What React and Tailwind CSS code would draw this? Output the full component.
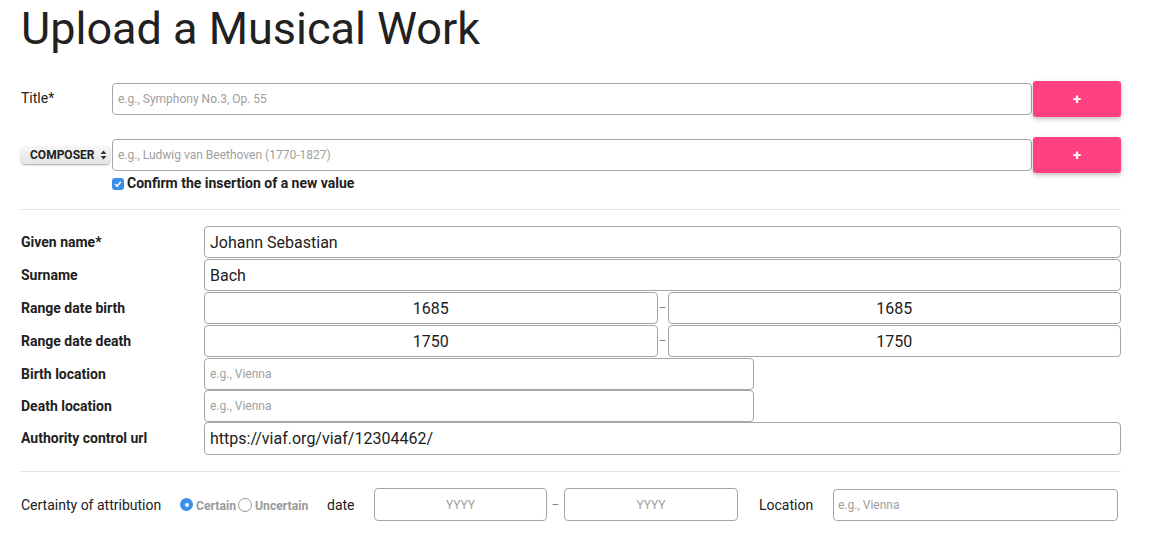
import React from "react";

const inputBase =
  "border border-[#a6a6a6] rounded-[4px] bg-white outline-none font-['Roboto',sans-serif] text-[#212121]";

const PlusButton = () => (
  <button className="w-[88px] h-[36px] ml-px bg-[#ff4081] text-white text-[15px] font-bold rounded-[3px] shadow-[0_2px_5px_rgba(0,0,0,0.26)] flex items-center justify-center">
    +
  </button>
);

const FieldRow = ({ label, children, className = "h-[32px]" }) => (
  <div className={`flex items-center ${className}`}>
    <label className="w-[183px] shrink-0 text-[14px] font-bold text-[#212121]">{label}</label>
    {children}
  </div>
);

const RangeInputs = ({ from, to }) => (
  <div className="flex items-center flex-1 h-full">
    <input readOnly value={from} className={`${inputBase} flex-1 h-full text-center text-[16px]`} />
    <span className="w-[10px] text-center text-[#888] text-[12px]">–</span>
    <input readOnly value={to} className={`${inputBase} flex-1 h-full text-center text-[16px]`} />
  </div>
);

const Radio = ({ checked, label, className = "" }) => (
  <span className={`flex items-center ${className}`}>
    {checked ? (
      <span className="w-[13px] h-[13px] rounded-full bg-[#3b8eea] flex items-center justify-center">
        <span className="w-[4px] h-[4px] rounded-full bg-white" />
      </span>
    ) : (
      <span className="w-[14px] h-[14px] rounded-full border border-[#9a9a9a] bg-white" />
    )}
    <span className="ml-[3px] pt-[2px] leading-[14px] text-[12.2px] font-bold text-[#9a9a9a]">{label}</span>
  </span>
);

export default function App() {
  return (
    <div className="bg-white w-[1156px] h-[549px] pl-[21px] pr-[35px] font-['Roboto',sans-serif] text-[#212121]">
      <h1 className="text-[45px] leading-none pt-[6px] h-[81px] font-normal">Upload a Musical Work</h1>

      {/* work title */}
      <div className="flex items-center h-[36px]">
        <label className="w-[91px] shrink-0 text-[14px] pb-px">Title*</label>
        <input
          placeholder="e.g., Symphony No.3, Op. 55"
          className={`${inputBase} flex-1 h-[32px] px-[5px] text-[12px] placeholder:text-[#9e9e9e]`}
        />
        <PlusButton />
      </div>

      {/* composer */}
      <div className="flex items-center h-[36px] mt-[20px]">
        <div className="w-[89px] h-[18px] mr-[2px] shrink-0 rounded-[4px] bg-gradient-to-b from-[#f7f7f7] to-[#e4e4e4] shadow-[0_1px_2px_rgba(0,0,0,0.35)] flex items-center justify-between pl-[9px] pr-[3px]">
          <span className="text-[12px] font-bold text-[#222]">COMPOSER</span>
          <svg width="7" height="10" viewBox="0 0 7 10">
            <path d="M3.5 0.5 L6.5 4 L0.5 4 Z" fill="#333" />
            <path d="M3.5 9.5 L6.5 6 L0.5 6 Z" fill="#333" />
          </svg>
        </div>
        <input
          placeholder="e.g., Ludwig van Beethoven (1770-1827)"
          className={`${inputBase} flex-1 h-[32px] px-[5px] text-[12px] placeholder:text-[#9e9e9e]`}
        />
        <PlusButton />
      </div>
      <div className="flex items-center ml-[91px] mt-[4px] h-[13px]">
        <span className="w-[12px] h-[12px] rounded-[3px] bg-[#3b8eea] flex items-center justify-center">
          <svg width="8" height="8" viewBox="0 0 8 8">
            <path d="M1.2 4.2 L3.2 6.1 L6.8 1.8" stroke="white" strokeWidth="1.5" fill="none" />
          </svg>
        </span>
        <span className="ml-[3px] text-[14px] font-bold text-[#212121]">Confirm the insertion of a new value</span>
      </div>

      <hr className="border-0 border-t border-[#e3e3e3] mt-[19px] mb-[16px]" />

      {/* composer details */}
      <div className="flex flex-col">
        <FieldRow label="Given name*">
          <input readOnly value="Johann Sebastian" className={`${inputBase} flex-1 h-full px-[5px] text-[16px]`} />
        </FieldRow>
        <FieldRow label="Surname" className="h-[32px] mt-px">
          <input readOnly value="Bach" className={`${inputBase} flex-1 h-full px-[5px] text-[16px]`} />
        </FieldRow>
        <FieldRow label="Range date birth" className="h-[32px] mt-px">
          <RangeInputs from="1685" to="1685" />
        </FieldRow>
        <FieldRow label="Range date death" className="h-[32px] mt-px">
          <RangeInputs from="1750" to="1750" />
        </FieldRow>
        <FieldRow label="Birth location" className="h-[32px] mt-px">
          <input
            placeholder="e.g., Vienna"
            className={`${inputBase} w-[550px] h-full px-[5px] text-[12px] placeholder:text-[#9e9e9e]`}
          />
        </FieldRow>
        <FieldRow label="Death location" className="h-[32px]">
          <input
            placeholder="e.g., Vienna"
            className={`${inputBase} w-[550px] h-full px-[5px] text-[12px] placeholder:text-[#9e9e9e]`}
          />
        </FieldRow>
        <FieldRow label="Authority control url" className="h-[33px]">
          <input
            readOnly
            value="https://viaf.org/viaf/12304462/"
            className={`${inputBase} flex-1 h-full px-[5px] text-[16px]`}
          />
        </FieldRow>
      </div>

      <hr className="border-0 border-t border-[#e3e3e3] mt-[16px] mb-[16px]" />

      {/* attribution */}
      <div className="flex items-center h-[33px] text-[14px] pr-[3px]">
        <span className="w-[159px] shrink-0 pt-px">Certainty of attribution</span>
        <div className="flex items-center w-[147px] shrink-0">
          <Radio checked label="Certain" />
          <Radio label="Uncertain" className="ml-[2px]" />
        </div>
        <span className="w-[47px] shrink-0 pt-px">date</span>
        <input
          placeholder="YYYY"
          className={`${inputBase} w-[173px] h-full text-center text-[12px] placeholder:text-[#9e9e9e]`}
        />
        <span className="w-[17px] text-center text-[#888] text-[12px]">–</span>
        <input
          placeholder="YYYY"
          className={`${inputBase} w-[174px] h-full text-center text-[12px] placeholder:text-[#9e9e9e]`}
        />
        <span className="ml-[21px] w-[74px] shrink-0 pt-px">Location</span>
        <input
          placeholder="e.g., Vienna"
          className={`${inputBase} flex-1 h-[32px] px-[4px] text-[12px] placeholder:text-[#9e9e9e]`}
        />
      </div>
    </div>
  );
}
